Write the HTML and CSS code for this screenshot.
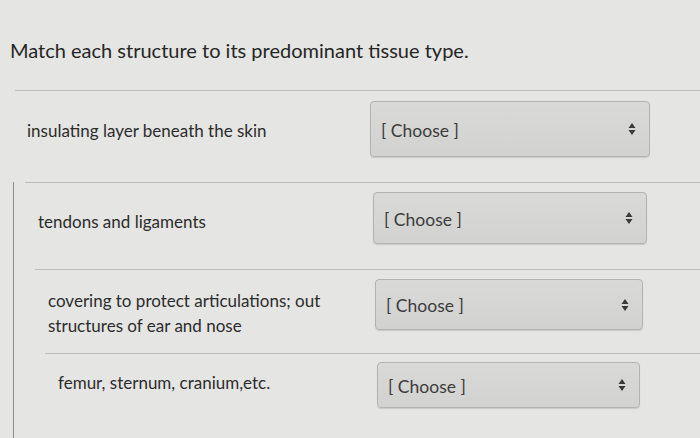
FILE: index.html
```html
<!DOCTYPE html>
<html>
<head>
<meta charset="utf-8">
<link rel="stylesheet" href="styles.css">
</head>
<body>
<div class="page">
  <h1 class="title">Match each structure to its predominant tissue type.</h1>
  <div class="rule r1"></div>
  <div class="row row1">
    <div class="label">insulating layer beneath the skin</div>
    <div class="select s1"><span>[ Choose ]</span><svg class="arrows" width="8" height="14" viewBox="0 0 8 14"><path d="M4 1 L7.5 6 L0.5 6 Z M0.5 8 L7.5 8 L4 13 Z" fill="#3a3a3a"/></svg></div>
  </div>
  <div class="lower">
    <div class="rule r2"></div>
    <div class="row row2">
      <div class="label">tendons and ligaments</div>
      <div class="select s2"><span>[ Choose ]</span><svg class="arrows" width="8" height="14" viewBox="0 0 8 14"><path d="M4 1 L7.5 6 L0.5 6 Z M0.5 8 L7.5 8 L4 13 Z" fill="#3a3a3a"/></svg></div>
    </div>
    <div class="rule r3"></div>
    <div class="row row3">
      <div class="label">covering to protect articulations; out<br>structures of ear and nose</div>
      <div class="select s3"><span>[ Choose ]</span><svg class="arrows" width="8" height="14" viewBox="0 0 8 14"><path d="M4 1 L7.5 6 L0.5 6 Z M0.5 8 L7.5 8 L4 13 Z" fill="#3a3a3a"/></svg></div>
    </div>
    <div class="rule r4"></div>
    <div class="row row4">
      <div class="label">femur, sternum, cranium,etc.</div>
      <div class="select s4"><span>[ Choose ]</span><svg class="arrows" width="8" height="14" viewBox="0 0 8 14"><path d="M4 1 L7.5 6 L0.5 6 Z M0.5 8 L7.5 8 L4 13 Z" fill="#3a3a3a"/></svg></div>
    </div>
  </div>
</div>
</body>
</html>
```
FILE: styles.css
```css
html, body {
  margin: 0;
  padding: 0;
}
body {
  width: 700px;
  height: 438px;
  overflow: hidden;
  background: #e5e5e3;
  font-family: Lato, "Open Sans", sans-serif;
  color: #2e2e2e;
}
.page {
  display: flex;
  flex-direction: column;
  height: 438px;
}
.title {
  margin: 0;
  padding: 38px 0 0 10px;
  font-size: 20px;
  font-weight: 400;
  color: #262626;
  line-height: 24px;
}
.rule {
  flex: none;
  height: 1px;
  background: #bdbdbb;
}
.r1 { margin: 28px 0 0 15px; }
.r2 { margin-left: 11px; }
.r3 { margin-left: 21px; }
.r4 { margin-left: 31px; }
.lower {
  flex: 1;
  display: flex;
  flex-direction: column;
  margin-left: 13px;
  border-left: 1px solid #8e8e8c;
}
.row {
  flex: none;
  display: flex;
  align-items: flex-start;
  box-sizing: border-box;
}
.label {
  flex: 1;
  font-size: 17px;
  line-height: 25px;
  color: #2c2c2c;
}
.row1 { height: 91px; padding-left: 27px; padding-top: 10px; }
.row1 .label { padding-top: 17px; }
.row2 { height: 86px; padding-left: 24px; padding-top: 9px; }
.row2 .label { padding-top: 17px; }
.row3 { height: 83px; padding-left: 34px; padding-top: 9px; }
.row3 .label { padding-top: 9px; }
.row4 { height: 86px; padding-left: 44px; padding-top: 8px; }
.row4 .label { padding-top: 8px; }
.select {
  flex: none;
  display: flex;
  align-items: center;
  justify-content: space-between;
  box-sizing: border-box;
  padding: 0 13px 0 10px;
  background: linear-gradient(#d9d9d8, #d2d2d1);
  border: 1px solid #b3b3b1;
  border-radius: 4px;
  box-shadow: 0 1px 1px rgba(0,0,0,0.12);
  font-size: 17.5px;
  color: #3c3c3c;
}
.select span { margin-top: 2px; }
.s1 { width: 280px; height: 56px; margin-right: 50px; }
.s2 { width: 274px; height: 52px; margin-right: 53px; }
.s3 { width: 268px; height: 51px; margin-right: 57px; }
.s4 { width: 263px; height: 46px; margin-right: 60px; }
.arrows { flex: none; }
```
